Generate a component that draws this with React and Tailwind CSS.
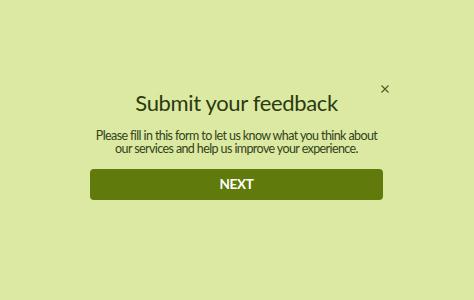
export default function App() {
  return (
    <div className="w-[474px] h-[300px] bg-[#dbe9a3] pt-[87px] px-[90px] relative" style={{ fontFamily: 'Lato, "Noto Sans", sans-serif' }}>
      <button className="absolute left-[380px] top-[84px] w-[10px] h-[10px] text-[#4b5a2a]" aria-label="close">
        <svg viewBox="0 0 10 10" width="10" height="10" fill="none" stroke="currentColor" strokeWidth="1.1">
          <path d="M1.5 1.5 L8.5 8.5 M8.5 1.5 L1.5 8.5" />
        </svg>
      </button>
      <div className="flex flex-col items-center w-[293px]">
        <h1 className="text-[22px] leading-[32px] tracking-[-0.35px] text-[#2b3b10] font-normal whitespace-nowrap">Submit your feedback</h1>
        <p className="mt-[10px] text-[12.5px] leading-[13px] tracking-[-0.6px] text-[#33441a] text-center whitespace-nowrap">
          Please fill in this form to let us know what you think about<br />our services and help us improve your experience.
        </p>
        <button className="mt-[14px] w-[293px] h-[31px] rounded-[4px] bg-[#617a0c] text-white font-bold text-[13.5px] tracking-[-0.3px]">NEXT</button>
      </div>
    </div>
  );
}
